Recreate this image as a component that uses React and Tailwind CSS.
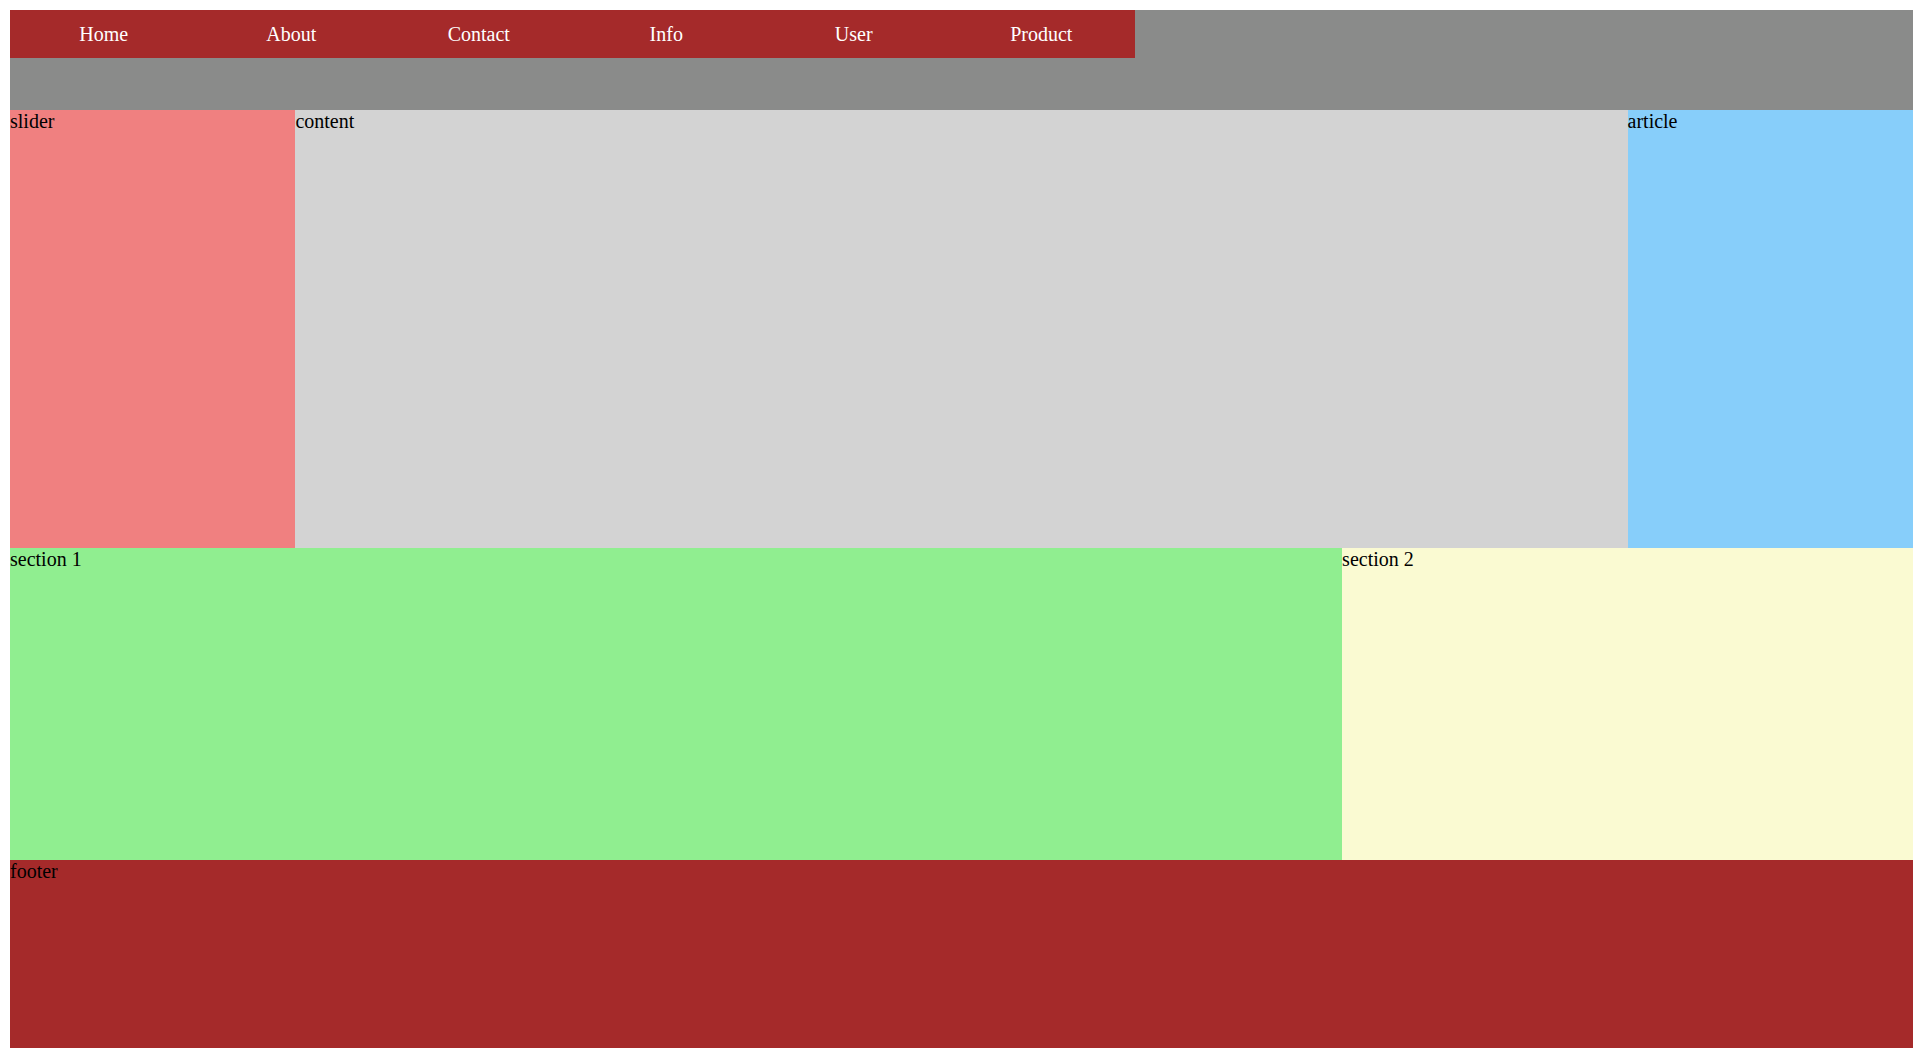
import React from 'react';

const links = ['Home', 'About', 'Contact', 'Info', 'User', 'Product'];

export default function App() {
    return (
        <div className="p-[10px] pb-[9px] bg-white text-black text-[20px] leading-[normal]" style={{ fontFamily: '"Liberation Serif", "Times New Roman", serif' }}>
            <header className="h-[100px] bg-[#8a8b8a]">
                <nav className="flex w-[1125px] h-[48px] bg-[#a52a2a]">
                    {links.map((l) => (
                        <a key={l} className="flex-1 text-center leading-[48px] text-white">
                            {l}
                        </a>
                    ))}
                </nav>
            </header>
            <div className="flex h-[438px]">
                <div className="w-[15%] bg-[#f08080]">slider</div>
                <div className="w-[70%] bg-[#d3d3d3]">content</div>
                <div className="w-[15%] bg-[#87cefa]">article</div>
            </div>
            <div className="flex h-[312px]">
                <div className="w-[70%] bg-[#90ee90]">section 1</div>
                <div className="w-[30%] bg-[#fafad2]">section 2</div>
            </div>
            <footer className="h-[188px] bg-[#a52a2a]">footer</footer>
        </div>
    );
}
